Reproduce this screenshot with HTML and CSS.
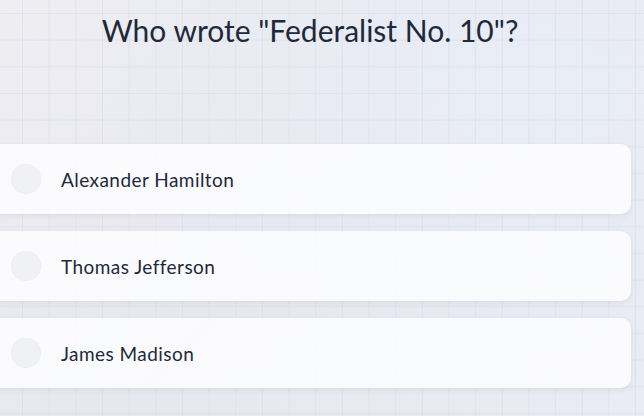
FILE: index.html
```html
<!DOCTYPE html>
<html>
<head>
<meta charset="utf-8">
<link rel="stylesheet" href="styles.css">
</head>
<body>
<div class="page">
  <h1 class="question">Who wrote "Federalist No. 10"?</h1>
  <div class="options">
    <div class="option"><span class="radio"></span><span class="label">Alexander Hamilton</span></div>
    <div class="option"><span class="radio"></span><span class="label">Thomas Jefferson</span></div>
    <div class="option"><span class="radio"></span><span class="label">James Madison</span></div>
  </div>
</div>
</body>
</html>
```
FILE: styles.css
```css
html, body {
  margin: 0;
  padding: 0;
  width: 644px;
  height: 416px;
  overflow: hidden;
}
body {
  font-family: Lato, "Noto Sans", sans-serif;
  color: #1f2937;
  background-color: #eaebf1;
  background-image:
    linear-gradient(to right, rgba(200, 204, 218, 0.3) 1px, transparent 1px),
    linear-gradient(to bottom, rgba(200, 204, 218, 0.3) 1px, transparent 1px),
    radial-gradient(ellipse at 80% 20%, #e9edf6 0%, rgba(233,237,246,0) 60%),
    linear-gradient(135deg, #eeeef3 0%, #e7e8ef 50%, #e9ecf4 100%);
  background-size: 26.667px 26.667px, 26.667px 26.667px, 100% 100%, 100% 100%;
  background-position: 22px 0, 0 13px, 0 0, 0 0;
}
.page {
  margin-left: -11px;
  width: 642px;
  display: flex;
  flex-direction: column;
}
.question {
  margin: 12px 0 0 0;
  font-size: 30px;
  font-weight: 400;
  line-height: 36px;
  text-align: center;
  color: #1e293b;
}
.options {
  margin-top: 96px;
  display: flex;
  flex-direction: column;
  gap: 17px;
}
.option {
  height: 70px;
  box-sizing: border-box;
  background: rgba(251, 251, 253, 0.96);
  border-radius: 10px;
  box-shadow: 0 2px 5px rgba(120, 125, 150, 0.12), 0 0 1px rgba(120,125,150,0.15);
  display: flex;
  align-items: center;
  padding-left: 22px;
}
.radio {
  width: 30px;
  height: 30px;
  border-radius: 50%;
  background: #f0f1f4;
  box-shadow: inset 0 0 0 1px #eceef2;
  flex: none;
}
.label {
  margin-left: 20px;
  font-size: 19px;
  letter-spacing: 0.45px;
  color: #1e293b;
}
```
